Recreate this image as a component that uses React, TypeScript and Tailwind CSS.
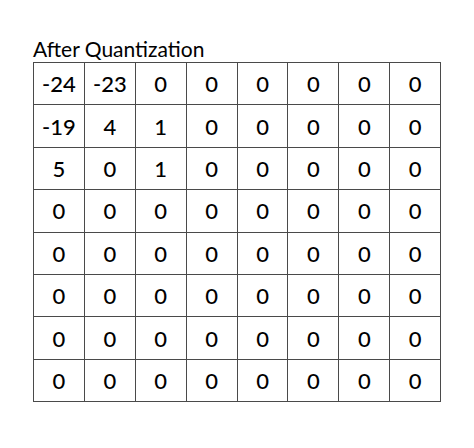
const rows = [
  ["-24", "-23", "0", "0", "0", "0", "0", "0"],
  ["-19", "4", "1", "0", "0", "0", "0", "0"],
  ["5", "0", "1", "0", "0", "0", "0", "0"],
  ["0", "0", "0", "0", "0", "0", "0", "0"],
  ["0", "0", "0", "0", "0", "0", "0", "0"],
  ["0", "0", "0", "0", "0", "0", "0", "0"],
  ["0", "0", "0", "0", "0", "0", "0", "0"],
  ["0", "0", "0", "0", "0", "0", "0", "0"],
];

export default function App() {
  return (
    <div className="h-[448px] w-[474px] bg-white pl-[33px] pt-[35px] text-black" style={{ fontFamily: "Lato, 'Open Sans', sans-serif" }}>
      <div className="text-[21px] leading-[27px]">After Quantization</div>
      <table className="border-collapse">
        <tbody>
          {rows.map((row, i) => (
            <tr key={i}>
              {row.map((v, j) => (
                <td key={j} className="h-[42.4px] w-[50.9px] border-[1.5px] border-[#4a4a4a] p-0 text-center text-[22px] font-medium">
                  {v}
                </td>
              ))}
            </tr>
          ))}
        </tbody>
      </table>
    </div>
  );
}
